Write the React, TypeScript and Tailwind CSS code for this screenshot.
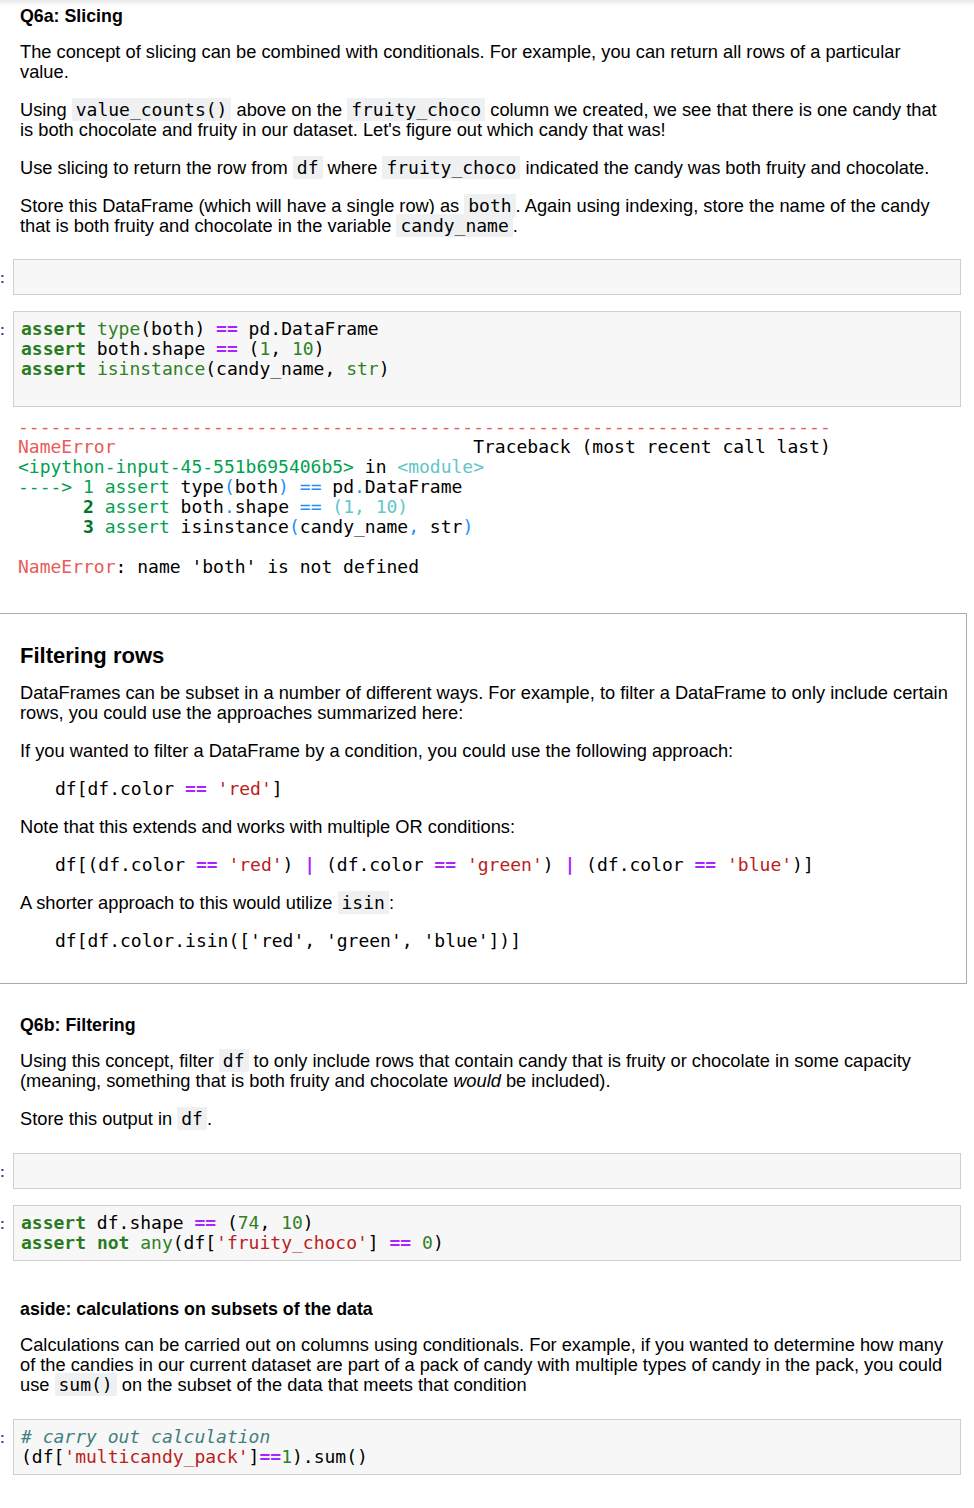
import React from "react";

function Kw({ children }: { children: React.ReactNode }) {
  return <span className="font-bold text-[#2a7b1e]">{children}</span>;
}
function Bi({ children }: { children: React.ReactNode }) {
  return <span className="text-[#2f8024]">{children}</span>;
}
function Num({ children }: { children: React.ReactNode }) {
  return <span className="text-[#2f8024]">{children}</span>;
}
function Op({ children }: { children: React.ReactNode }) {
  return <span className="font-bold text-[#aa22ff]">{children}</span>;
}
function Str({ children }: { children: React.ReactNode }) {
  return <span className="text-[#ba2121]">{children}</span>;
}
function Cmt({ children }: { children: React.ReactNode }) {
  return <span className="italic text-[#408080]">{children}</span>;
}

function C({ children }: { children: React.ReactNode }) {
  return (
    <code className="bg-[#eff0f1] px-[4px] py-[1px] font-['DejaVu_Sans_Mono',monospace] text-[18px] leading-none">
      {children}
    </code>
  );
}

function CodeCell({ children, className = "" }: { children?: React.ReactNode; className?: string }) {
  return (
    <div className={`flex items-start ${className}`}>
      <div className="w-[13px] shrink-0 pt-[9px] font-['Liberation_Sans',Arial,sans-serif] text-[14px] leading-[20px] font-bold text-[#303f9f]">
        :
      </div>
      <div className="w-[948px] min-h-[36px] border border-[#cfcfcf] bg-[#f7f7f7] px-[7px] py-[7px] font-['DejaVu_Sans_Mono',monospace] text-[18px] leading-[20px] whitespace-pre text-black">
        {children}
      </div>
    </div>
  );
}

function Md({ children, className = "" }: { children: React.ReactNode; className?: string }) {
  return <div className={`pl-[20px] pr-[10px] ${className}`}>{children}</div>;
}

function H4({ children, className = "" }: { children: React.ReactNode; className?: string }) {
  return <div className={`whitespace-nowrap font-bold text-[17.8px] leading-[20px] ${className}`}>{children}</div>;
}

function P({ children, className = "" }: { children: React.ReactNode; className?: string }) {
  return <p className={`whitespace-nowrap ${className}`}>{children}</p>;
}

function Pre({ children, className = "" }: { children: React.ReactNode; className?: string }) {
  return (
    <div className={`ml-[35px] font-['DejaVu_Sans_Mono',monospace] text-[18px] leading-[20px] whitespace-pre ${className}`}>
      {children}
    </div>
  );
}

export default function App() {
  const red = "text-[#e75c58]";
  const green = "text-[#00a250]";
  const dgreen = "font-bold text-[#007427]";
  const cyan = "text-[#60c6c8]";
  const blue = "text-[#208ffb]";
  return (
    <div className="w-[974px] min-h-[1508px] bg-white bg-[linear-gradient(#e9e9e9,#ffffff_6px)] pt-[6px] pb-[30px] font-['Liberation_Sans',Arial,sans-serif] text-[18.25px] leading-[20px] text-black">
      <Md>
        <H4>Q6a: Slicing</H4>
        <P className="mt-[16px]">
          The concept of slicing can be combined with conditionals. For example, you can return all rows of a particular
          <br />
          value.
        </P>
        <P className="mt-[18px]">
          Using <C>value_counts()</C> above on the <C>fruity_choco</C> column we created, we see that there is one candy that
          <br />
          is both chocolate and fruity in our dataset. Let's figure out which candy that was!
        </P>
        <P className="mt-[18px]">
          Use slicing to return the row from <C>df</C> where <C>fruity_choco</C> indicated the candy was both fruity and chocolate.
        </P>
        <P className="mt-[18px]">
          Store this DataFrame (which will have a single row) as <C>both</C>. Again using indexing, store the name of the candy
          <br />
          that is both fruity and chocolate in the variable <C>candy_name</C>.
        </P>
      </Md>

      <CodeCell className="mt-[23px]">{" "}</CodeCell>

      <CodeCell className="mt-[16px]">
        <Kw>assert</Kw> <Bi>type</Bi>(both) <Op>==</Op> pd.DataFrame{"\n"}
        <Kw>assert</Kw> both.shape <Op>==</Op> (<Num>1</Num>, <Num>10</Num>){"\n"}
        <Kw>assert</Kw> <Bi>isinstance</Bi>(candy_name, <Bi>str</Bi>){"\n"}
        {" "}
      </CodeCell>

      <div className="mt-[10px] pl-[18px] font-['DejaVu_Sans_Mono',monospace] text-[18px] leading-[20px] whitespace-pre text-black">
        <span className={red}>---------------------------------------------------------------------------</span>
        {"\n"}
        <span className={red}>NameError</span>
        {"                                 Traceback (most recent call last)\n"}
        <span className={green}>&lt;ipython-input-45-551b695406b5&gt;</span> in <span className={cyan}>&lt;module&gt;</span>
        {"\n"}
        <span className={green}>----&gt; 1 assert</span> type<span className={blue}>(</span>both<span className={blue}>)</span>{" "}
        <span className={blue}>==</span> pd<span className={blue}>.</span>DataFrame{"\n"}
        {"      "}
        <span className={dgreen}>2</span> <span className={green}>assert</span> both<span className={blue}>.</span>shape{" "}
        <span className={blue}>==</span> <span className={cyan}>(1, 10)</span>
        {"\n"}
        {"      "}
        <span className={dgreen}>3</span> <span className={green}>assert</span> isinstance<span className={blue}>(</span>candy_name
        <span className={blue}>,</span> str<span className={blue}>)</span>
        {"\n\n"}
        <span className={red}>NameError</span>: name 'both' is not defined
      </div>

      <div className="mt-[36px] w-[967px] border-t border-r border-b border-[#ababab] pt-[30px] pb-[32px]">
        <Md>
          <div className="whitespace-nowrap font-bold text-[22px] leading-[24px]">Filtering rows</div>
          <P className="mt-[15px]">
            DataFrames can be subset in a number of different ways. For example, to filter a DataFrame to only include certain
            <br />
            rows, you could use the approaches summarized here:
          </P>
          <P className="mt-[18px]">If you wanted to filter a DataFrame by a condition, you could use the following approach:</P>
          <Pre className="mt-[18px]">
            df[df.color <Op>==</Op> <Str>'red'</Str>]
          </Pre>
          <P className="mt-[18px]">Note that this extends and works with multiple OR conditions:</P>
          <Pre className="mt-[18px]">
            df[(df.color <Op>==</Op> <Str>'red'</Str>) <Op>|</Op> (df.color <Op>==</Op> <Str>'green'</Str>) <Op>|</Op> (df.color{" "}
            <Op>==</Op> <Str>'blue'</Str>)]
          </Pre>
          <P className="mt-[18px]">
            A shorter approach to this would utilize <C>isin</C>:
          </P>
          <Pre className="mt-[18px]">df[df.color.isin(['red', 'green', 'blue'])]</Pre>
        </Md>
      </div>

      <Md className="mt-[31px]">
        <H4>Q6b: Filtering</H4>
        <P className="mt-[16px]">
          Using this concept, filter <C>df</C> to only include rows that contain candy that is fruity or chocolate in some capacity
          <br />
          (meaning, something that is both fruity and chocolate <em>would</em> be included).
        </P>
        <P className="mt-[18px]">
          Store this output in <C>df</C>.
        </P>
      </Md>

      <CodeCell className="mt-[24px]">{" "}</CodeCell>

      <CodeCell className="mt-[16px]">
        <Kw>assert</Kw> df.shape <Op>==</Op> (<Num>74</Num>, <Num>10</Num>){"\n"}
        <Kw>assert</Kw> <Kw>not</Kw> <Bi>any</Bi>(df[<Str>'fruity_choco'</Str>] <Op>==</Op> <Num>0</Num>)
      </CodeCell>

      <Md className="mt-[38px]">
        <H4>aside: calculations on subsets of the data</H4>
        <P className="mt-[16px]">
          Calculations can be carried out on columns using conditionals. For example, if you wanted to determine how many
          <br />
          of the candies in our current dataset are part of a pack of candy with multiple types of candy in the pack, you could
          <br />
          use <C>sum()</C> on the subset of the data that meets that condition
        </P>
      </Md>

      <CodeCell className="mt-[24px]">
        <Cmt># carry out calculation</Cmt>
        {"\n"}(df[<Str>'multicandy_pack'</Str>]<Op>==</Op><Num>1</Num>).sum()
      </CodeCell>
    </div>
  );
}
